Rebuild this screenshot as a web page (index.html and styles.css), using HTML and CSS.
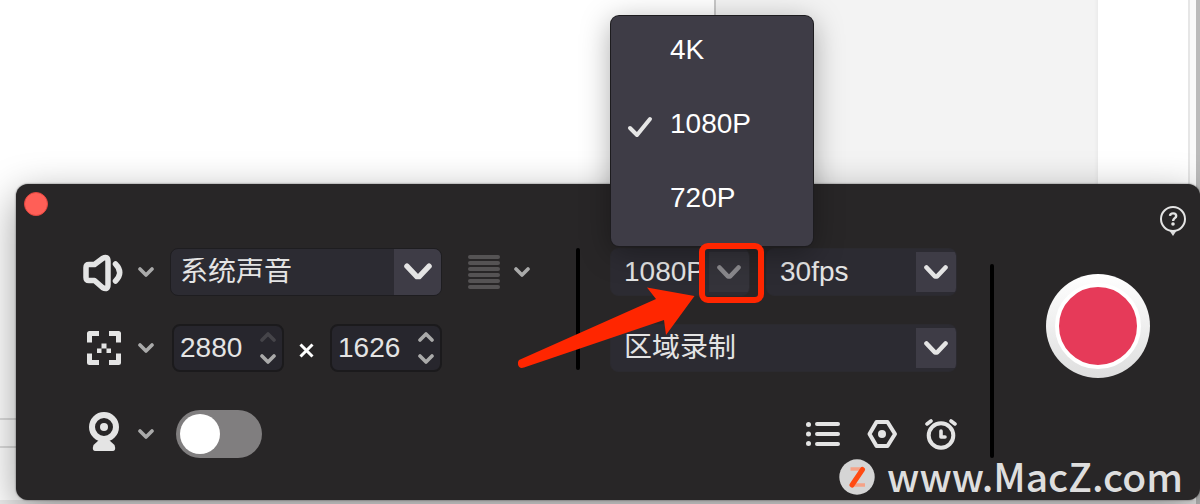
FILE: index.html
```html
<!DOCTYPE html>
<html lang="zh-CN">
<head>
<meta charset="utf-8">
<title>录屏</title>
<link rel="stylesheet" href="styles.css">
</head>
<body>
<svg class="defs" aria-hidden="true">
  <symbol id="chev" viewBox="0 0 16 10"><path d="M2 2l6 6 6-6" fill="none" stroke="currentColor" stroke-width="3.600" stroke-linecap="round" stroke-linejoin="round"/></symbol>
  <symbol id="thin" viewBox="0 0 24 15"><path d="M2.500 2.500L11 11.500h2L21.500 2.500" fill="none" stroke="currentColor" stroke-width="4.600" stroke-linecap="round" stroke-linejoin="round"/></symbol>
</svg>
<main class="panel">
  <header class="titlebar">
    <button class="close" aria-label="关闭"></button>
    <button class="help" aria-label="帮助">
      <svg width="26" height="30" viewBox="0 0 26 30"><path d="M9 24l4 6 4-6z" fill="#dcdcdc"/><circle cx="13" cy="13" r="12" fill="#282627" stroke="#e4e4e4" stroke-width="2"/><path d="M10 9.800c.3-3.400 6.200-3.200 6.200.1 0 2.300-3.100 2.300-3.100 5" fill="none" stroke="#e4e4e4" stroke-width="2.400"/><circle cx="13" cy="18" r="1.800" fill="#e4e4e4"/></svg>
    </button>
  </header>
  <div class="controls">
    <section class="sources">
      <div class="row">
        <button class="source" aria-label="声音">
          <svg width="44" height="40" viewBox="0 0 44 40"><path d="M4 15.500Q4 12.500 7 12.500H12.500L20.500 6.500Q26 3.500 26 9.500V32.500Q26 38.500 20.500 35.500L12.500 28.500H7Q4 28.500 4 25.500z" fill="none" stroke="#e4e4e4" stroke-width="5.500" stroke-linejoin="round"/><path d="M33.500 12q8.500 8.500 0 17" fill="none" stroke="#e4e4e4" stroke-width="5.500" stroke-linecap="round"/></svg>
          <svg class="mini"><use href="#chev"/></svg>
        </button>
        <div class="select sound"><select aria-label="声音来源"><option>系统声音</option></select><span class="drop"><svg class="big"><use href="#thin"/></svg></span></div>
        <button class="level" aria-label="音量">
          <span class="meter"><i></i><i></i><i></i><i></i><i></i><i></i></span>
          <svg class="mini"><use href="#chev"/></svg>
        </button>
      </div>
      <div class="row">
        <button class="source" aria-label="录制区域">
          <svg width="44" height="40" viewBox="0 0 44 40"><path d="M7.500 14.500V5.500H17M27 5.500H36.500V14.500M36.500 25.500V34.500H27M17 34.500H7.500V25.500" fill="none" stroke="#e4e4e4" stroke-width="5" stroke-linejoin="round"/><path d="M19.500 15.500h5v5h-5zM15 20.500h4.500v4.500H15zM24.500 20.500H29v4.500h-4.500z" fill="#e4e4e4"/></svg>
          <svg class="mini"><use href="#chev"/></svg>
        </button>
        <div class="dims">
          <div class="number"><input aria-label="宽度" value="2880"><span class="steps"><button class="off" aria-label="增加宽度"><svg class="mini up"><use href="#chev"/></svg></button><button aria-label="减少宽度"><svg class="mini"><use href="#chev"/></svg></button></span></div>
          <svg width="16" height="22" viewBox="0 0 16 22"><path d="M1.500 7.500l12 12M13.500 7.500l-12 12" stroke="#fff" stroke-width="3"/></svg>
          <div class="number"><input aria-label="高度" value="1626"><span class="steps"><button aria-label="增加高度"><svg class="mini up"><use href="#chev"/></svg></button><button aria-label="减少高度"><svg class="mini"><use href="#chev"/></svg></button></span></div>
        </div>
      </div>
      <div class="row last">
        <button class="source" aria-label="摄像头">
          <svg width="44" height="44" viewBox="0 0 44 44"><circle cx="22" cy="15" r="12" fill="none" stroke="#e4e4e4" stroke-width="6"/><circle cx="22" cy="15" r="4" fill="#e4e4e4"/><path d="M17 28h10l5.500 5q2 6-2 6h-17q-4 0-2-6z" fill="#e4e4e4"/></svg>
          <svg class="mini"><use href="#chev"/></svg>
        </button>
        <input class="toggle" type="checkbox" role="switch" aria-label="启用摄像头">
      </div>
    </section>
    <div class="divider first"></div>
    <section class="output">
      <div class="pair">
        <div class="resolution">
          <div class="select flat dim"><select aria-label="分辨率"><option>1080P</option></select><span class="drop"><svg class="mid"><use href="#thin"/></svg></span></div>
          <div class="menu" role="menu">
            <button role="menuitemradio" aria-checked="false"><span class="tick"></span>4K</button>
            <button role="menuitemradio" aria-checked="true"><svg class="tick" viewBox="0 0 26 28"><path d="M3 18l7 7L23 9" fill="none" stroke="#e6e6e6" stroke-width="4" stroke-linecap="round" stroke-linejoin="round"/></svg>1080P</button>
            <button role="menuitemradio" aria-checked="false"><span class="tick"></span>720P</button>
          </div>
          <svg class="pointer" viewBox="510 240 260 140" aria-hidden="true"><rect x="702" y="246" width="59" height="54" rx="6" fill="none" stroke="#ff2600" stroke-width="6"/><path d="M519 360L656 299L647 287.500L694.500 296L666 335L664 320L524 367.500Q519 369 518 364.500Q517.500 361.500 519 360z" fill="#ff2600"/></svg>
        </div>
        <div class="select flat rate"><select aria-label="帧率"><option>30fps</option></select><span class="drop"><svg class="mid"><use href="#thin"/></svg></span></div>
      </div>
      <div class="select flat"><select aria-label="录制模式"><option>区域录制</option></select><span class="drop"><svg class="mid"><use href="#thin"/></svg></span></div>
      <nav class="tools">
        <button aria-label="列表"><svg width="36" height="32" viewBox="0 0 36 32"><path d="M12 6h21M12 16h21M12 26h21" stroke="#e4e4e4" stroke-width="4" stroke-linecap="round"/><g fill="#e4e4e4"><circle cx="3.500" cy="6.500" r="2.500"/><circle cx="3.500" cy="16" r="2.500"/><circle cx="3.500" cy="25.500" r="2.500"/></g></svg></button>
        <button aria-label="设置"><svg width="32" height="32" viewBox="0 0 32 32"><path d="M9.500 4h11L28 16l-7.500 12h-11L2.500 16z" fill="none" stroke="#e4e4e4" stroke-width="4" stroke-linejoin="round"/><circle cx="15" cy="16" r="4" fill="#e4e4e4"/></svg></button>
        <button aria-label="定时"><svg width="32" height="32" viewBox="0 0 32 32"><circle cx="16" cy="17.500" r="12.300" fill="none" stroke="#e4e4e4" stroke-width="4"/><path d="M16 13v6h4M2 6l4-3M26 3l4 3" fill="none" stroke="#e4e4e4" stroke-width="3.600" stroke-linecap="round" stroke-linejoin="round"/></svg></button>
      </nav>
    </section>
    <div class="divider second"></div>
    <button class="record" aria-label="开始录制"></button>
  </div>
</main>
<div class="watermark">
  <svg width="36" height="36" viewBox="0 0 36 36"><circle cx="18" cy="18" r="17.700" fill="#d5d5d5"/><path d="M11.500 10H24M12 26H26" stroke="#f5a287" stroke-width="3.600"/><path d="M23.500 10.500L13 26" stroke="#ff4a12" stroke-width="5" stroke-linecap="round"/></svg>
  <span>www.MacZ.com</span>
</div>
</body>
</html>
```
FILE: styles.css
```css
*, *::before { box-sizing: border-box; }
body {
  margin: 0;
  min-height: 100vh;
  padding: 184px 0 4px 16px;
  position: relative;
  overflow: hidden;
  font: 28px/28px "Liberation Sans", "Noto Sans CJK SC", sans-serif;
  color: #e4e4e4;
  background:
    linear-gradient(#ddd, #ddd) 0 418px / 16px 2px no-repeat,
    linear-gradient(#ddd, #ddd) 0 446px / 16px 2px no-repeat,
    linear-gradient(#ececec, #ececec) 0 100% / 1196px 4px no-repeat,
    linear-gradient(90deg, #fff 714px, #c8c8c8 714px 716px, #f3f3f3 716px 1094px, #ebebeb 1098px, #fff 1098px 1188px, #e6e6e6 1188px 1190px, #fafafa 1190px 1196px, #bbb 1196px);
}
.defs { position: absolute; width: 0; height: 0; }
button, input, select { font: inherit; color: inherit; }
button { background: none; border: 0; padding: 0; }
svg { display: block; flex: none; }
.panel {
  background: #282627;
  border-radius: 12px;
  padding-bottom: 42px;
  box-shadow: 0 0 2px rgba(0, 0, 0, .6), 0 12px 40px rgba(0, 0, 0, .4);
}
.titlebar {
  display: flex;
  justify-content: space-between;
  align-items: flex-start;
  height: 64px;
  padding: 8px 14px 0 8px;
}
.close {
  width: 24px;
  height: 24px;
  border-radius: 50%;
  background: #ff5f57;
  border: 1px solid #e2463f;
}
.help { margin-top: 14px; }
.controls {
  display: flex;
  align-items: flex-start;
  padding: 0 50px 0 66px;
}
.sources, .output { display: flex; flex-direction: column; gap: 28px; }
.output { flex: 1; min-width: 0; margin: 0 33px 0 30px; }
.row { display: flex; align-items: center; height: 48px; }
.row.last, .tools { margin-top: 10px; }
.source {
  display: flex;
  align-items: center;
  gap: 12px;
  margin-right: 16px;
  color: #aaa;
}
.mini { width: 16px; height: 10px; }
.mid { width: 24px; height: 15px; }
.big { width: 28px; height: 18px; }
.up { transform: scaleY(-1); }
.select {
  display: flex;
  height: 48px;
  position: relative;
  background: #2c2b32;
  border: 1px solid #1e1d20;
  border-radius: 8px;
  overflow: hidden;
}
.select select {
  width: 100%;
  appearance: none;
  background: none;
  border: 0;
  padding: 0 0 0 9px;
  outline: 0;
}
.drop {
  position: absolute;
  inset: 0 0 0 auto;
  width: 47px;
  display: grid;
  place-items: center;
  background: #3e3c46;
  pointer-events: none;
}
.sound { width: 272px; }
.flat { border-color: #2b2a2f; }
.flat select { padding-left: 13px; }
.flat .drop { inset: 3px 0 3px auto; width: 40px; }
.dim .drop { background: #34333a; color: #8a898d; }
.level { display: flex; align-items: center; gap: 14px; margin-left: 26px; color: #aaa; }
.meter { display: grid; gap: 2px; width: 32px; }
.meter i { height: 4px; border-radius: 2px; background: #555354; }
.dims { display: flex; align-items: center; justify-content: space-between; width: 272px; padding-left: 2px; }
.number {
  display: flex;
  align-items: center;
  width: 112px;
  height: 48px;
  background: #27262d;
  border: 2px solid #1b1a1c;
  border-radius: 8px;
  padding: 0 6px;
}
.number input { flex: 1; width: 0; min-width: 0; height: 40px; border: 0; padding: 0; background: none; outline: 0; }
.steps { display: grid; gap: 12px; color: #aaa; }
.off { color: #454449; }
.toggle {
  appearance: none;
  width: 86px;
  height: 48px;
  margin: 0 0 0 6px;
  border-radius: 24px;
  background: #807e7f;
  padding: 4px;
}
.toggle::before { content: ""; display: block; width: 40px; height: 40px; border-radius: 50%; background: #fff; }
.toggle:checked::before { margin-left: auto; }
.divider { width: 4px; border-radius: 2px; background: #000; }
.first { height: 122px; margin-left: 46px; }
.second { align-self: stretch; margin-top: 16px; }
.pair { display: flex; gap: 16px; }
.resolution { position: relative; width: 140px; z-index: 1; }
.rate { flex: 1; }
.menu {
  position: absolute;
  left: 1px;
  bottom: 50px;
  width: 202px;
  display: grid;
  gap: 46px;
  padding: 20px 0 34px 16px;
  background: #3e3c46;
  border-radius: 8px;
  color: #fff;
  box-shadow: 0 0 0 1px #1d1c1f, 0 6px 30px rgba(0, 0, 0, .35);
}
.menu button { display: flex; align-items: center; gap: 17px; }
.tick { width: 26px; height: 28px; }
.pointer { position: absolute; left: -100px; top: -8px; width: 260px; height: 140px; pointer-events: none; }
.tools { display: flex; justify-content: flex-end; align-items: center; gap: 26px; height: 48px; }
.record {
  display: grid;
  place-items: center;
  width: 104px;
  height: 104px;
  margin: 26px 0 0 52px;
  border-radius: 50%;
  background: linear-gradient(#fff, #dedede);
}
.record::before {
  content: "";
  width: 86px;
  height: 86px;
  border: 4px solid #fff;
  border-radius: 50%;
  background: #e63a59;
}
.watermark {
  position: absolute;
  right: 17px;
  bottom: 9px;
  z-index: 2;
  display: flex;
  align-items: flex-start;
  gap: 12px;
  font: 500 39px/32px "Noto Sans CJK SC", sans-serif;
  color: #dedede;
}
```
